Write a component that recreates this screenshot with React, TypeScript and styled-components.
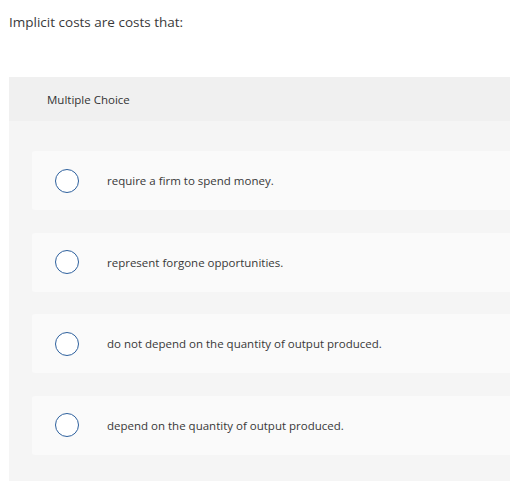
import React from 'react'
import styled, { createGlobalStyle } from 'styled-components'

const GlobalStyle = createGlobalStyle`
    html, body {
        margin: 0;
        padding: 0;
        background: #ffffff;
        overflow: hidden;
    }
    body {
        font-family: 'Open Sans', 'Liberation Sans', sans-serif;
        color: #333333;
    }
`

const Page = styled.div`
    width: 510px;
    height: 499px;
    overflow: hidden;
`

const Question = styled.p`
    margin: 0;
    padding: 13px 0 0 9px;
    height: 77px;
    box-sizing: border-box;
    font-size: 13.5px;
    line-height: 18px;
    color: #3a3a3a;
`

const Panel = styled.section`
    margin-left: 9px;
    background: #f5f5f5;
    width: 520px;
`

const PanelHeader = styled.div`
    height: 44px;
    display: flex;
    align-items: center;
    padding-left: 38px;
    background: #f0f0f0;
    font-size: 11.5px;
    color: #333333;
`

const Options = styled.div`
    display: flex;
    flex-direction: column;
    gap: 22.5px;
    padding: 30px 0 26px 23px;
`

const Option = styled.label`
    display: flex;
    align-items: center;
    height: 59px;
    padding-left: 23px;
    background: #fafafa;
    border-radius: 3px 0 0 3px;
    cursor: pointer;
    font-size: 11.5px;
    color: #383838;
`

const Radio = styled.span`
    width: 24px;
    height: 24px;
    box-sizing: border-box;
    border-radius: 50%;
    border: 1.5px solid #2d609d;
    background: #ffffff;
    margin-right: 28px;
    flex-shrink: 0;
`

const choices = [
    'require a firm to spend money.',
    'represent forgone opportunities.',
    'do not depend on the quantity of output produced.',
    'depend on the quantity of output produced.',
]

export default function App() {
    return (
        <Page>
            <GlobalStyle />
            <Question>Implicit costs are costs that:</Question>
            <Panel>
                <PanelHeader>Multiple Choice</PanelHeader>
                <Options>
                    {choices.map((c) => (
                        <Option key={c}>
                            <Radio />
                            {c}
                        </Option>
                    ))}
                </Options>
            </Panel>
        </Page>
    )
}
